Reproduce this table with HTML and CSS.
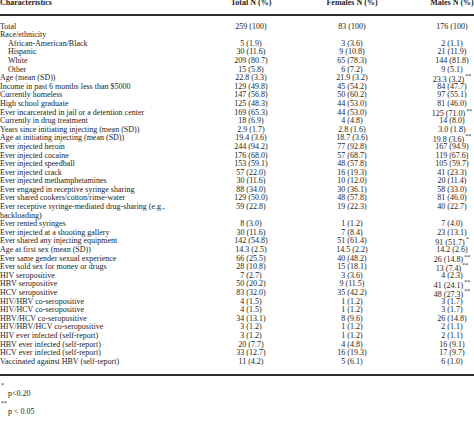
FILE: index.html
```html
<!DOCTYPE html>
<html lang="en">
<head>
<meta charset="utf-8">
<title>Characteristics table</title>
<link rel="stylesheet" href="styles.css">
</head>
<body>
<div class="page">
<table class="stats">
  <colgroup>
    <col class="c-label"><col class="c-total"><col class="c-num"><col class="c-num">
  </colgroup>
  <thead>
    <tr><th class="label">Characteristics</th><th>Total N (%)</th><th>Females N (%)</th><th>Males N (%)</th></tr>
  </thead>
  <tbody>
    <tr class="first"><td class="label">Total</td><td>259 (100)</td><td>83 (100)</td><td>176 (100)</td></tr>
    <tr><td class="label">Race/ethnicity</td><td></td><td></td><td></td></tr>
    <tr><td class="label sub">African-American/Black</td><td>5 (1.9)</td><td>3 (3.6)</td><td>2 (1.1)</td></tr>
    <tr><td class="label sub">Hispanic</td><td>30 (11.6)</td><td>9 (10.8)</td><td>21 (11.9)</td></tr>
    <tr><td class="label sub">White</td><td>209 (80.7)</td><td>65 (78.3)</td><td>144 (81.8)</td></tr>
    <tr><td class="label sub">Other</td><td>15 (5.8)</td><td>6 (7.2)</td><td>9 (5.1)</td></tr>
    <tr><td class="label">Age (mean (SD))</td><td>22.8 (3.3)</td><td>21.9 (3.2)</td><td><span class="sig">23.3 (3.2)<sup>**</sup></span></td></tr>
    <tr><td class="label">Income in past 6 months less than $5000</td><td>129 (49.8)</td><td>45 (54.2)</td><td>84 (47.7)</td></tr>
    <tr><td class="label">Currently homeless</td><td>147 (56.8)</td><td>50 (60.2)</td><td>97 (55.1)</td></tr>
    <tr><td class="label">High school graduate</td><td>125 (48.3)</td><td>44 (53.0)</td><td>81 (46.0)</td></tr>
    <tr><td class="label">Ever incarcerated in jail or a detention center</td><td>169 (65.3)</td><td>44 (53.0)</td><td><span class="sig">125 (71.0)<sup>**</sup></span></td></tr>
    <tr><td class="label">Currently in drug treatment</td><td>18 (6.9)</td><td>4 (4.8)</td><td>14 (8.0)</td></tr>
    <tr><td class="label">Years since initiating injecting (mean (SD))</td><td>2.9 (1.7)</td><td>2.8 (1.6)</td><td>3.0 (1.8)</td></tr>
    <tr><td class="label">Age at initiating injecting (mean (SD))</td><td>19.4 (3.6)</td><td>18.7 (3.6)</td><td><span class="sig">19.8 (3.6)<sup>**</sup></span></td></tr>
    <tr><td class="label">Ever injected heroin</td><td>244 (94.2)</td><td>77 (92.8)</td><td>167 (94.9)</td></tr>
    <tr><td class="label">Ever injected cocaine</td><td>176 (68.0)</td><td>57 (68.7)</td><td>119 (67.6)</td></tr>
    <tr><td class="label">Ever injected speedball</td><td>153 (59.1)</td><td>48 (57.8)</td><td>105 (59.7)</td></tr>
    <tr><td class="label">Ever injected crack</td><td>57 (22.0)</td><td>16 (19.3)</td><td>41 (23.3)</td></tr>
    <tr><td class="label">Ever injected methamphetamines</td><td>30 (11.6)</td><td>10 (12.0)</td><td>20 (11.4)</td></tr>
    <tr><td class="label">Ever engaged in receptive syringe sharing</td><td>88 (34.0)</td><td>30 (36.1)</td><td>58 (33.0)</td></tr>
    <tr><td class="label">Ever shared cookers/cotton/rinse-water</td><td>129 (50.0)</td><td>48 (57.8)</td><td>81 (46.0)</td></tr>
    <tr><td class="label">Ever receptive syringe-mediated drug-sharing (e.g.,<br>backloading)</td><td>59 (22.8)</td><td>19 (22.3)</td><td>40 (22.7)</td></tr>
    <tr><td class="label">Ever rented syringes</td><td>8 (3.0)</td><td>1 (1.2)</td><td>7 (4.0)</td></tr>
    <tr><td class="label">Ever injected at a shooting gallery</td><td>30 (11.6)</td><td>7 (8.4)</td><td>23 (13.1)</td></tr>
    <tr><td class="label">Ever shared any injecting equipment</td><td>142 (54.8)</td><td>51 (61.4)</td><td><span class="sig">91 (51.7)<sup>*</sup></span></td></tr>
    <tr><td class="label">Age at first sex (mean (SD))</td><td>14.3 (2.5)</td><td>14.5 (2.2)</td><td>14.2 (2.6)</td></tr>
    <tr><td class="label">Ever same gender sexual experience</td><td>66 (25.5)</td><td>40 (48.2)</td><td><span class="sig">26 (14.8)<sup>**</sup></span></td></tr>
    <tr><td class="label">Ever sold sex for money or drugs</td><td>28 (10.8)</td><td>15 (18.1)</td><td><span class="sig">13 (7.4)<sup>**</sup></span></td></tr>
    <tr><td class="label">HIV seropositive</td><td>7 (2.7)</td><td>3 (3.6)</td><td>4 (2.3)</td></tr>
    <tr><td class="label">HBV seropositive</td><td>50 (20.2)</td><td>9 (11.5)</td><td><span class="sig">41 (24.1)<sup>**</sup></span></td></tr>
    <tr><td class="label">HCV seropositive</td><td>83 (32.0)</td><td>35 (42.2)</td><td><span class="sig">48 (27.3)<sup>**</sup></span></td></tr>
    <tr><td class="label">HIV/HBV co-seropositive</td><td>4 (1.5)</td><td>1 (1.2)</td><td>3 (1.7)</td></tr>
    <tr><td class="label">HIV/HCV co-seropositive</td><td>4 (1.5)</td><td>1 (1.2)</td><td>3 (1.7)</td></tr>
    <tr><td class="label">HBV/HCV co-seropositive</td><td>34 (13.1)</td><td>8 (9.6)</td><td>26 (14.8)</td></tr>
    <tr><td class="label">HIV/HBV/HCV co-seropositive</td><td>3 (1.2)</td><td>1 (1.2)</td><td>2 (1.1)</td></tr>
    <tr><td class="label">HIV ever infected (self-report)</td><td>3 (1.2)</td><td>1 (1.2)</td><td>2 (1.1)</td></tr>
    <tr><td class="label">HBV ever infected (self-report)</td><td>20 (7.7)</td><td>4 (4.8)</td><td>16 (9.1)</td></tr>
    <tr><td class="label">HCV ever infected (self-report)</td><td>33 (12.7)</td><td>16 (19.3)</td><td>17 (9.7)</td></tr>
    <tr class="last"><td class="label">Vaccinated against HBV (self-report)</td><td>11 (4.2)</td><td>5 (6.1)</td><td>6 (1.0)</td></tr>
  </tbody>
</table>
<div class="notes">
  <div class="note">
    <div class="mark">*</div>
    <div class="note-text">p&lt;0.20</div>
  </div>
  <div class="note">
    <div class="mark">**</div>
    <div class="note-text">p &lt; 0.05</div>
  </div>
</div>
</div>
</body>
</html>
```

FILE: styles.css
```css
html, body {
  margin: 0;
  padding: 0;
  background: #ffffff;
  overflow: hidden;
}

.page {
  width: 502px;
  margin-top: -1px;
  font-family: "Liberation Serif", "Times New Roman", serif;
  font-size: 8px;
  color: #1c1c1c;
}

.stats {
  width: 502px;
  border-collapse: collapse;
  table-layout: fixed;
}

.c-label { width: 200px; }
.c-total { width: 102px; }
.c-num { width: 100px; }

.stats th,
.stats td {
  padding: 0;
  line-height: 8.6px;
  height: 8.6px;
  text-align: center;
  vertical-align: top;
  white-space: nowrap;
  font-weight: normal;
}

.stats th {
  font-weight: bold;
  padding-bottom: 6px;
}

.stats thead tr {
  border-bottom: 2px solid #2e2e2e;
}

.stats .label {
  text-align: left;
}

.stats .sub {
  padding-left: 8px;
}

.stats tr.first td {
  padding-top: 7px;
}

.stats tr.last td {
  padding-bottom: 8px;
}

.stats tbody tr.last {
  border-bottom: 2px solid #2e2e2e;
}

.sig {
  position: relative;
  top: 1.5px;
}

.sig sup {
  font-size: 6px;
  line-height: 0;
  vertical-align: 0;
  position: relative;
  top: -3.5px;
  margin-left: 1px;
}

.notes {
  padding-top: 6px;
}

.note + .note {
  margin-top: 2px;
}

.mark {
  font-size: 6px;
  line-height: 7px;
  padding-left: 1px;
}

.note-text {
  line-height: 9px;
  padding-left: 8px;
}
```
